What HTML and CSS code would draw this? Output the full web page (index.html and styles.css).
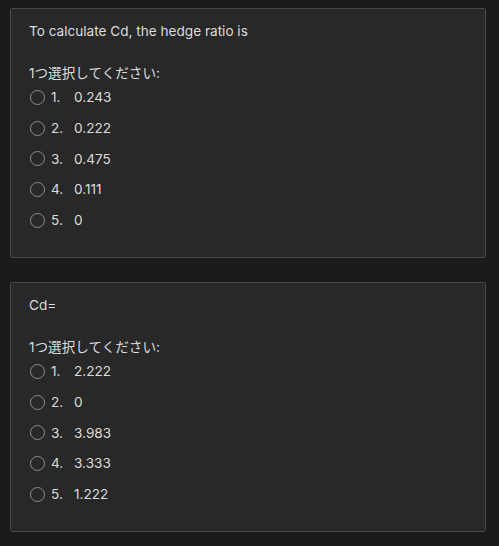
FILE: index.html
```html
<!DOCTYPE html>
<html lang="ja">
<head>
<meta charset="utf-8">
<link rel="stylesheet" href="styles.css">
</head>
<body>
<div class="page">
  <div class="card">
    <div class="qtext">To calculate Cd, the hedge ratio is</div>
    <div class="prompt">1つ選択してください:</div>
    <div class="answers">
      <div class="opt"><span class="radio"></span><span class="num">1.</span><span class="val">0.243</span></div>
      <div class="opt"><span class="radio"></span><span class="num">2.</span><span class="val">0.222</span></div>
      <div class="opt"><span class="radio"></span><span class="num">3.</span><span class="val">0.475</span></div>
      <div class="opt"><span class="radio"></span><span class="num">4.</span><span class="val">0.111</span></div>
      <div class="opt"><span class="radio"></span><span class="num">5.</span><span class="val">0</span></div>
    </div>
  </div>
  <div class="card">
    <div class="qtext">Cd=</div>
    <div class="prompt">1つ選択してください:</div>
    <div class="answers">
      <div class="opt"><span class="radio"></span><span class="num">1.</span><span class="val">2.222</span></div>
      <div class="opt"><span class="radio"></span><span class="num">2.</span><span class="val">0</span></div>
      <div class="opt"><span class="radio"></span><span class="num">3.</span><span class="val">3.983</span></div>
      <div class="opt"><span class="radio"></span><span class="num">4.</span><span class="val">3.333</span></div>
      <div class="opt"><span class="radio"></span><span class="num">5.</span><span class="val">1.222</span></div>
    </div>
  </div>
</div>
</body>
</html>
```
FILE: styles.css
```css
html, body {
  margin: 0;
  padding: 0;
  background: #1b1b1b;
}
body {
  font-family: Inter, "Noto Sans CJK JP", sans-serif;
  font-size: 13.6px;
  color: #dcdcdc;
}
.page {
  display: flex;
  flex-direction: column;
  gap: 24px;
  padding: 8px 13px 0 10px;
}
.card {
  background: #282828;
  border: 1px solid #474747;
  border-radius: 2px;
  height: 250px;
  box-sizing: border-box;
  padding: 12px 18px 0 18px;
}
.qtext {
  line-height: 20px;
}
.prompt {
  margin-top: 22px;
  line-height: 20px;
}
.answers {
  display: flex;
  flex-direction: column;
  margin-top: -1px;
}
.opt {
  display: flex;
  align-items: center;
  height: 30.7px;
}
.radio {
  display: block;
  flex: 0 0 15px;
  width: 15px;
  height: 15px;
  border: 1.3px solid #8c8c8c;
  border-radius: 50%;
  box-sizing: border-box;
  margin-left: 1px;
  margin-right: 6px;
}
.num {
  width: 23px;
}
```
